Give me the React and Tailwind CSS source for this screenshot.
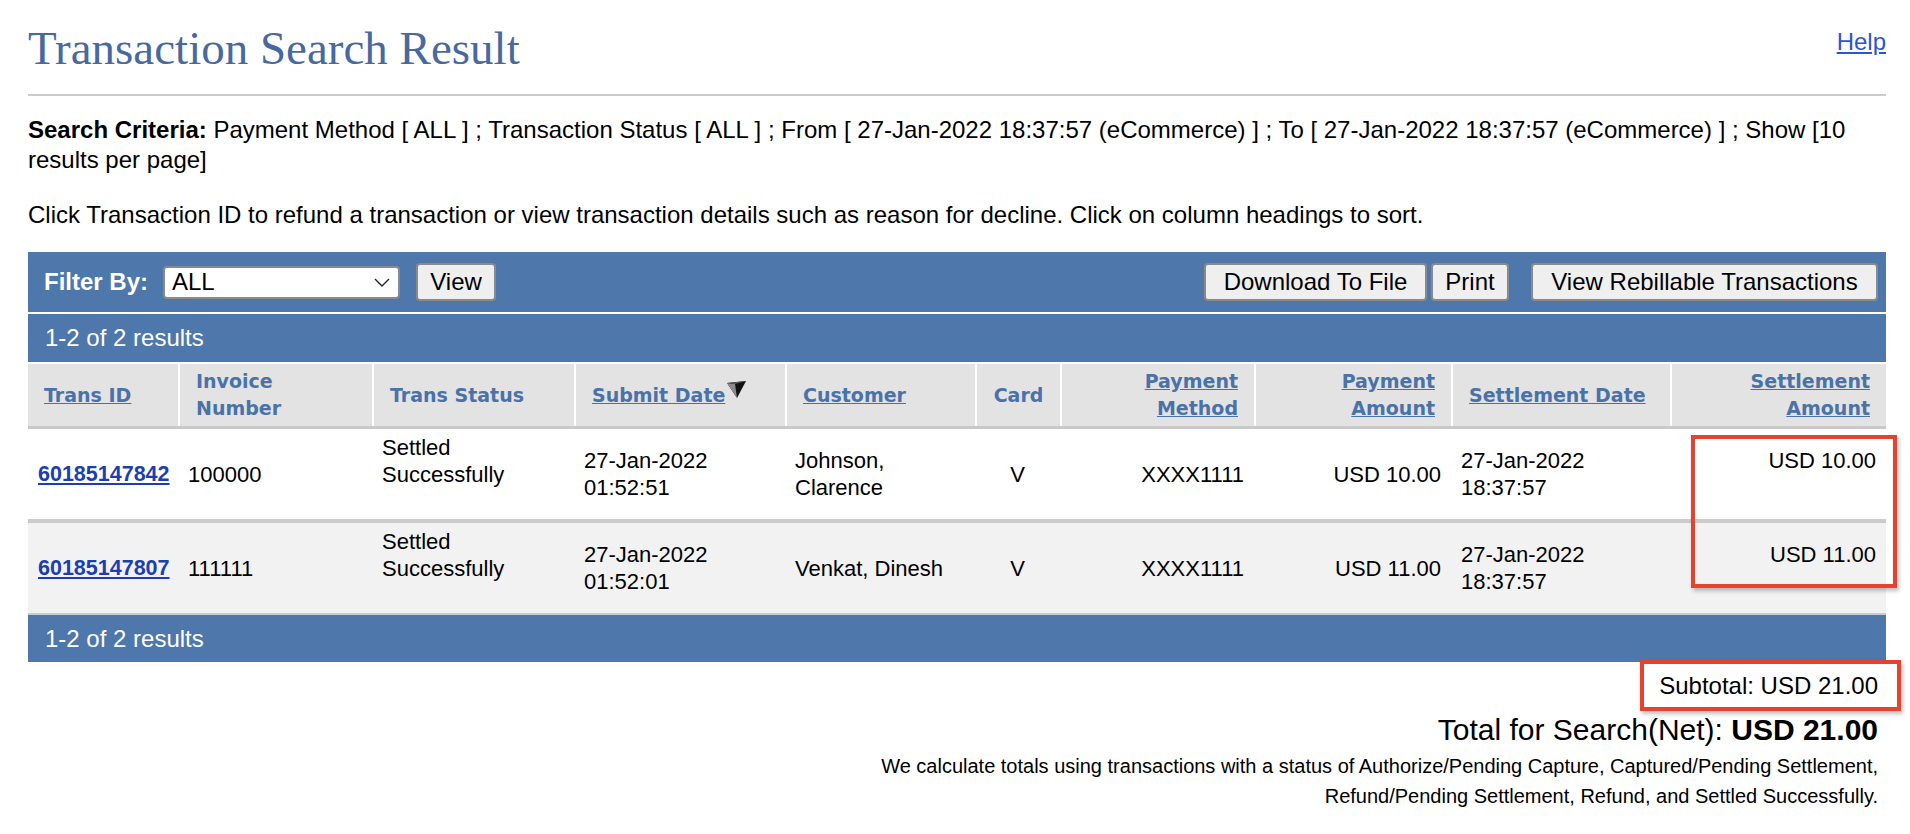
import React from 'react'

const sans = { fontFamily: '"Liberation Sans", Arial, sans-serif' }
const headFont = { fontFamily: '"DejaVu Sans", Verdana, sans-serif' }

const cols = 'grid grid-cols-[150px_194px_202px_211px_190px_85px_194px_197px_219px_216px]'

const rows = [
  { id: '60185147842', invoice: '100000', submit: ['27-Jan-2022', '01:52:51'], customer: ['Johnson,', 'Clarence'], amount: 'USD 10.00', cls: 'h-[94px] bg-white border-b-4' },
  { id: '60185147807', invoice: '111111', submit: ['27-Jan-2022', '01:52:01'], customer: ['Venkat, Dinesh'], amount: 'USD 11.00', cls: 'h-[92px] bg-[#f2f2f2] border-b-2' },
]

function Btn({ children, className = '' }) {
  return (
    <button className={`flex h-[38px] items-center justify-center rounded-[4px] border-2 border-[#8a8a8a] bg-[#efefef] text-[24px] text-black ${className}`}>
      {children}
    </button>
  )
}

function SortArrow() {
  return (
    <svg width="20" height="18" viewBox="0 0 20 18" className="-mt-[10px] ml-[2px] shrink-0">
      <polygon points="0,2 19,0 10,17" fill="#111" />
      <polygon points="0,2 8,3 10,17" fill="#8c8c8c" />
      <polygon points="0,2 19,0 8,3" fill="#5a5a5a" />
    </svg>
  )
}

function Th({ children, align = 'left', first }) {
  const j = align === 'right' ? 'justify-end text-right' : align === 'center' ? 'justify-center text-center' : 'justify-start'
  return (
    <div className={`flex items-center px-[16px] leading-[27px] ${j} ${first ? '' : 'border-l-2 border-white'}`}>
      {children}
    </div>
  )
}

function Td({ children, align = 'left' }) {
  const j = align === 'right' ? 'justify-end text-right' : align === 'center' ? 'justify-center text-center' : 'justify-start'
  return <div className={`flex items-center px-[10px] ${j}`}>{children}</div>
}

export default function App() {
  return (
    <div className="min-h-screen bg-white pl-[28px] pr-[24px] text-black" style={sans}>
      <div className="flex items-start justify-between">
        <h1 className="pt-[25px] text-[47px] leading-[46px] text-[#47699d]" style={{ fontFamily: '"Liberation Serif", "Times New Roman", serif' }}>
          Transaction Search Result
        </h1>
        <a href="#" className="mt-[29px] text-[24px] leading-[26px] text-[#2c55d6] underline">Help</a>
      </div>
      <div className="mt-[23px] h-[2px] bg-[#cccccc]" />

      <p className="mt-[19px] text-[24px] leading-[30px]">
        <span className="font-bold">Search Criteria: </span>Payment Method [ ALL ] ; Transaction Status [ ALL ] ; From [ 27-Jan-2022 18:37:57 (eCommerce) ] ; To [ 27-Jan-2022 18:37:57 (eCommerce) ] ; Show [10 results per page]
      </p>
      <p className="mt-[25px] text-[24px] leading-[30px]">
        Click Transaction ID to refund a transaction or view transaction details such as reason for decline. Click on column headings to sort.
      </p>

      <div className="mt-[22px]">
        <div className="flex h-[60px] items-center bg-[#4e77ab] pl-[16px] pr-[8px]">
          <span className="text-[24px] font-bold text-white">Filter By:</span>
          <div className="ml-[15px] flex h-[33px] w-[237px] items-center justify-between rounded-[4px] border-2 border-[#8a8a8a] bg-white pl-[7px] pr-[8px] text-[24px]">
            <span>ALL</span>
            <svg width="16" height="9" viewBox="0 0 16 9" fill="none" stroke="#222" strokeWidth="1.4">
              <polyline points="1,1 8,8 15,1" />
            </svg>
          </div>
          <Btn className="ml-[16px] w-[80px]">View</Btn>
          <div className="ml-auto flex items-center">
            <Btn className="w-[223px]">Download To File</Btn>
            <Btn className="ml-[4px] w-[78px]">Print</Btn>
            <Btn className="ml-[22px] w-[347px]">View Rebillable Transactions</Btn>
          </div>
        </div>

        <div className="mt-[2px] flex h-[48px] items-center bg-[#4e77ab] pl-[17px] text-[24px] text-white">1-2 of 2 results</div>

        <div className={`${cols} mt-[2px] h-[65px] border-b-[3px] border-[#c9c9c9] bg-[#e3e3e3] text-[19px] font-bold text-[#4a72a9]`} style={headFont}>
          <Th first><a href="#" className="underline">Trans ID</a></Th>
          <Th>Invoice<br />Number</Th>
          <Th>Trans Status</Th>
          <Th><a href="#" className="underline">Submit Date</a><SortArrow /></Th>
          <Th><a href="#" className="underline">Customer</a></Th>
          <Th align="center">Card</Th>
          <Th align="right"><a href="#" className="underline">Payment<br />Method</a></Th>
          <Th align="right"><a href="#" className="underline">Payment<br />Amount</a></Th>
          <Th><a href="#" className="underline">Settlement Date</a></Th>
          <Th align="right"><a href="#" className="underline">Settlement<br />Amount</a></Th>
        </div>

        <div className="relative">
          {rows.map((r) => (
            <div key={r.id} className={`${cols} ${r.cls} border-[#cbcbcb] text-[22px] leading-[27px]`}>
              <Td><a href="#" className="text-[21.5px] font-bold text-[#1d3eb0] underline">{r.id}</a></Td>
              <Td>{r.invoice}</Td>
              <Td><span>Settled<br />Successfully<br />&nbsp;</span></Td>
              <Td><span>{r.submit[0]}<br />{r.submit[1]}</span></Td>
              <Td><span>{r.customer.map((c, i) => <React.Fragment key={i}>{i > 0 && <br />}{c}</React.Fragment>)}</span></Td>
              <Td align="center">V</Td>
              <Td align="right">XXXX1111</Td>
              <Td align="right">{r.amount}</Td>
              <Td><span>27-Jan-2022<br />18:37:57</span></Td>
              <Td align="right"><span>{r.amount}<br />&nbsp;</span></Td>
            </div>
          ))}
          <div className="pointer-events-none absolute left-[1663px] top-[6px] h-[153px] w-[206px] border-4 border-[#e5432d] shadow-[2px_3px_4px_rgba(0,0,0,0.25)]" />
        </div>

        <div className="flex h-[47px] items-center bg-[#4e77ab] pl-[17px] text-[24px] text-white">1-2 of 2 results</div>
      </div>

      <div className="flex flex-col items-end pr-[8px]">
        <div className="relative mt-[9px] text-[24px] leading-[30px]">
          Subtotal: USD 21.00
          <div className="pointer-events-none absolute -right-[23px] -top-[11px] h-[51px] w-[261px] border-4 border-[#e5432d] shadow-[2px_3px_4px_rgba(0,0,0,0.25)]" />
        </div>
        <div className="mt-[11px] text-[30px] leading-[36px]">
          Total for Search(Net): <b>USD 21.00</b>
        </div>
        <p className="mt-[3px] text-right text-[20px] leading-[30px]">
          We calculate totals using transactions with a status of Authorize/Pending Capture, Captured/Pending Settlement,<br />
          Refund/Pending Settlement, Refund, and Settled Successfully.
        </p>
      </div>
    </div>
  )
}
